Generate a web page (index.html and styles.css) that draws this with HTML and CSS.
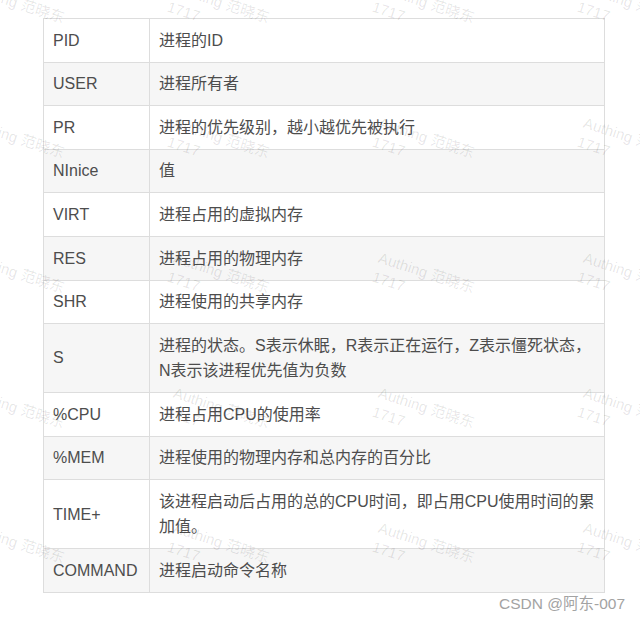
FILE: index.html
```html
<!DOCTYPE html>
<html lang="zh-CN">
<head>
    <meta charset="UTF-8">
    <meta name="viewport" content="width=device-width, initial-scale=1.0">
    <title>top 字段说明</title>
    <link rel="stylesheet" href="styles.css">
</head>
<body>
    <div class="article">
        <table class="fields">
            <colgroup>
                <col class="col-name">
                <col>
            </colgroup>
            <tbody>
                <tr><td>PID</td><td>进程的ID</td></tr>
                <tr><td>USER</td><td>进程所有者</td></tr>
                <tr><td>PR</td><td>进程的优先级别，越小越优先被执行</td></tr>
                <tr><td>NInice</td><td>值</td></tr>
                <tr><td>VIRT</td><td>进程占用的虚拟内存</td></tr>
                <tr><td>RES</td><td>进程占用的物理内存</td></tr>
                <tr><td>SHR</td><td>进程使用的共享内存</td></tr>
                <tr><td>S</td><td>进程的状态。S表示休眠，R表示正在运行，Z表示僵死状态，N表示该进程优先值为负数</td></tr>
                <tr><td>%CPU</td><td>进程占用CPU的使用率</td></tr>
                <tr><td>%MEM</td><td>进程使用的物理内存和总内存的百分比</td></tr>
                <tr><td>TIME+</td><td>该进程启动后占用的总的CPU时间，即占用CPU使用时间的累加值。</td></tr>
                <tr><td>COMMAND</td><td>进程启动命令名称</td></tr>
            </tbody>
        </table>
    </div>
    <div class="csdn-mark">CSDN @阿东-007</div>

    <!-- watermark overlay -->
    <div class="watermark">
        <div class="wm-grid">
            <div class="wm"><span>Authing 范晓东</span><span>1717</span></div>
            <div class="wm"><span>Authing 范晓东</span><span>1717</span></div>
            <div class="wm"><span>Authing 范晓东</span><span>1717</span></div>
            <div class="wm"><span>Authing 范晓东</span><span>1717</span></div>
            <div class="wm"><span>Authing 范晓东</span><span>1717</span></div>
            <div class="wm"><span>Authing 范晓东</span><span>1717</span></div>
            <div class="wm"><span>Authing 范晓东</span><span>1717</span></div>
            <div class="wm"><span>Authing 范晓东</span><span>1717</span></div>
            <div class="wm"><span>Authing 范晓东</span><span>1717</span></div>
            <div class="wm"><span>Authing 范晓东</span><span>1717</span></div>
            <div class="wm"><span>Authing 范晓东</span><span>1717</span></div>
            <div class="wm"><span>Authing 范晓东</span><span>1717</span></div>
            <div class="wm"><span>Authing 范晓东</span><span>1717</span></div>
            <div class="wm"><span>Authing 范晓东</span><span>1717</span></div>
            <div class="wm"><span>Authing 范晓东</span><span>1717</span></div>
            <div class="wm"><span>Authing 范晓东</span><span>1717</span></div>
            <div class="wm"><span>Authing 范晓东</span><span>1717</span></div>
            <div class="wm"><span>Authing 范晓东</span><span>1717</span></div>
            <div class="wm"><span>Authing 范晓东</span><span>1717</span></div>
            <div class="wm"><span>Authing 范晓东</span><span>1717</span></div>
        </div>
    </div>
</body>
</html>
```

FILE: styles.css
```css
html, body {
    margin: 0;
    padding: 0;
}
body {
    position: relative;
    width: 640px;
    height: 618px;
    overflow: hidden;
    background-color: #ffffff;
    color: #4d4d4d;
    font-family: "Liberation Sans", "Noto Sans CJK SC", sans-serif;
    font-size: 16px;
}
.article {
    padding: 18px 0 0 43px;
}
.fields {
    width: 562px;
    border-collapse: collapse;
    table-layout: fixed;
}
.fields .col-name {
    width: 106px;
}
.fields td {
    border: 1px solid #dddddd;
    padding: 8.6px 8px 8.6px 9px;
    line-height: 25.4px;
    vertical-align: middle;
}
.fields tr:nth-child(even) td {
    background-color: #f6f6f6;
}
.csdn-mark {
    text-align: right;
    padding-right: 15px;
    margin-top: 1px;
    line-height: 20px;
    font-size: 15.5px;
    color: #a3a3a3;
}
.watermark {
    position: absolute;
    top: 0;
    left: 0;
    right: 0;
    bottom: 0;
    overflow: hidden;
    pointer-events: none;
}
.wm-grid {
    display: grid;
    grid-template-columns: repeat(4, 205px);
    grid-auto-rows: 135px;
    margin: -22px 0 0 -28px;
}
.wm {
    display: flex;
    flex-direction: column;
    transform: rotate(18deg);
    transform-origin: 0 0;
    font-size: 15px;
    line-height: 20px;
    color: rgba(0, 0, 0, 0.1);
    white-space: nowrap;
}
```
